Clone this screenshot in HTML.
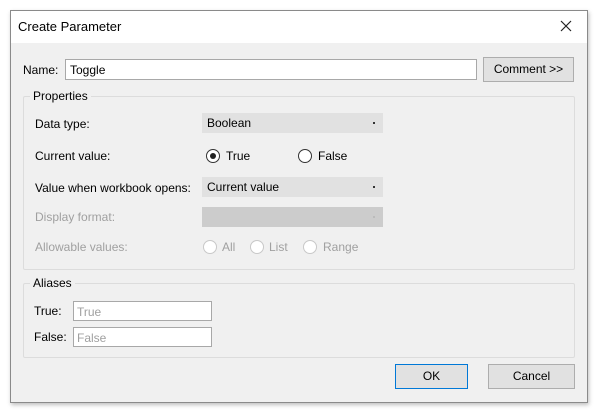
<!DOCTYPE html>
<html><head><style>
body{margin:0;width:600px;height:415px;background:#fff;position:relative;font-family:"Liberation Sans",sans-serif;font-size:12px;color:#000;overflow:hidden}
.a{position:absolute}
.t{position:absolute;white-space:nowrap;line-height:14px}
.dis{color:#a0a0a0}
.combo{position:absolute;background:#e1e1e1;height:20px;width:181px;left:202px}
.combo span{position:absolute;left:5px;top:3px}
.combo i{position:absolute;right:8px;top:9px;width:2px;height:2px;background:#333}
.radio{position:absolute;width:12px;height:12px;border:1px solid #333;border-radius:50%;background:#fff}
.radio.d{border-color:#c8c8c8}
.grp{position:absolute;border:1px solid #dcdcdc;border-radius:2px}
.inp{position:absolute;background:#fff;border:1px solid #a8a8a8}
.btn{position:absolute;background:#e1e1e1;border:1px solid #adadad;text-align:center;line-height:23px}
</style></head><body>
<div class="a" style="left:10px;top:10px;width:576px;height:391px;border:1px solid #8a8a8a;background:#f0f0f0;box-shadow:1px 2px 4px rgba(0,0,0,.25)"></div>
<div class="a" style="left:11px;top:11px;width:576px;height:32px;background:#fff"></div>
<div class="t" style="left:18px;top:20px;font-size:13px">Create Parameter</div>
<svg class="a" style="left:560px;top:20px" width="12" height="12"><path d="M1 1L11 11M11 1L1 11" stroke="#222" stroke-width="1.2"/></svg>

<div class="t" style="left:23px;top:63px">Name:</div>
<div class="inp" style="left:65px;top:59px;width:410px;height:19px"></div>
<div class="t" style="left:70px;top:63px">Toggle</div>
<div class="btn" style="left:483px;top:57px;width:89px;height:23px">Comment &gt;&gt;</div>

<div class="grp" style="left:23px;top:96px;width:550px;height:172px"></div>
<div class="t" style="left:30px;top:89px;background:#f0f0f0;padding:0 3px">Properties</div>
<div class="t" style="left:35px;top:117px">Data type:</div>
<div class="combo" style="top:113px"><span>Boolean</span><i></i></div>
<div class="t" style="left:35px;top:149px">Current value:</div>
<div class="radio" style="left:206px;top:149px"></div>
<div class="a" style="left:210px;top:153px;width:6px;height:6px;border-radius:50%;background:#222"></div>
<div class="t" style="left:226px;top:149px">True</div>
<div class="radio" style="left:298px;top:149px"></div>
<div class="t" style="left:318px;top:149px">False</div>
<div class="t" style="left:35px;top:181px">Value when workbook opens:</div>
<div class="combo" style="top:177px"><span>Current value</span><i></i></div>
<div class="t dis" style="left:35px;top:210px">Display format:</div>
<div class="combo" style="top:207px;background:#ccc"><i style="background:#bbb"></i></div>
<div class="t dis" style="left:35px;top:240px">Allowable values:</div>
<div class="radio d" style="left:203px;top:240px"></div>
<div class="t dis" style="left:222px;top:240px">All</div>
<div class="radio d" style="left:250px;top:240px"></div>
<div class="t dis" style="left:269px;top:240px">List</div>
<div class="radio d" style="left:303px;top:240px"></div>
<div class="t dis" style="left:323px;top:240px">Range</div>

<div class="grp" style="left:23px;top:283px;width:550px;height:73px"></div>
<div class="t" style="left:30px;top:276px;background:#f0f0f0;padding:0 3px">Aliases</div>
<div class="t" style="left:34px;top:304px">True:</div>
<div class="inp" style="left:73px;top:301px;width:137px;height:18px"></div>
<div class="t dis" style="left:77px;top:305px">True</div>
<div class="t" style="left:34px;top:330px">False:</div>
<div class="inp" style="left:73px;top:327px;width:137px;height:18px"></div>
<div class="t dis" style="left:77px;top:331px">False</div>

<div class="btn" style="left:395px;top:364px;width:71px;height:23px;border-color:#0078d7">OK</div>
<div class="btn" style="left:488px;top:364px;width:85px;height:23px">Cancel</div>
</body></html>
